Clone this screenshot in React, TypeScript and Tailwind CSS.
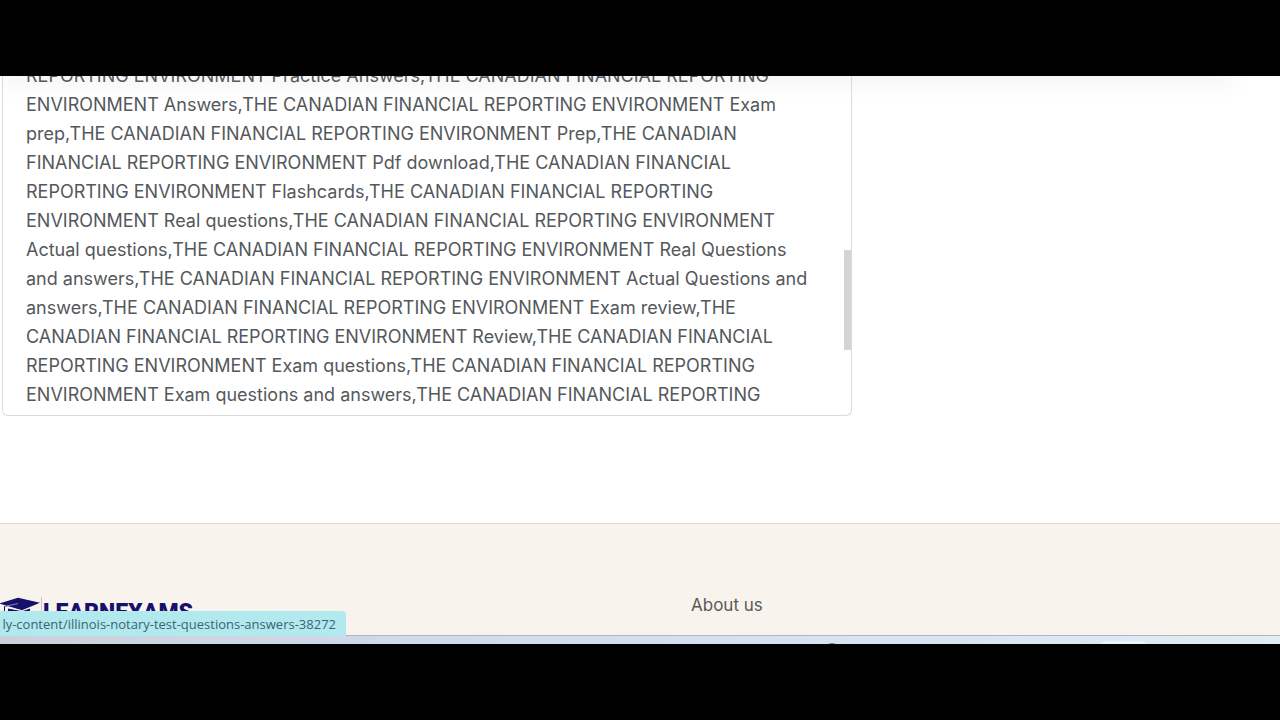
const lines = [
  'REPORTING ENVIRONMENT Practice Answers,THE CANADIAN FINANCIAL REPORTING',
  'ENVIRONMENT Answers,THE CANADIAN FINANCIAL REPORTING ENVIRONMENT Exam',
  'prep,THE CANADIAN FINANCIAL REPORTING ENVIRONMENT Prep,THE CANADIAN',
  'FINANCIAL REPORTING ENVIRONMENT Pdf download,THE CANADIAN FINANCIAL',
  'REPORTING ENVIRONMENT Flashcards,THE CANADIAN FINANCIAL REPORTING',
  'ENVIRONMENT Real questions,THE CANADIAN FINANCIAL REPORTING ENVIRONMENT',
  'Actual questions,THE CANADIAN FINANCIAL REPORTING ENVIRONMENT Real Questions',
  'and answers,THE CANADIAN FINANCIAL REPORTING ENVIRONMENT Actual Questions and',
  'answers,THE CANADIAN FINANCIAL REPORTING ENVIRONMENT Exam review,THE',
  'CANADIAN FINANCIAL REPORTING ENVIRONMENT Review,THE CANADIAN FINANCIAL',
  'REPORTING ENVIRONMENT Exam questions,THE CANADIAN FINANCIAL REPORTING',
  'ENVIRONMENT Exam questions and answers,THE CANADIAN FINANCIAL REPORTING',
];

function KeywordCard() {
  return (
    <article className="relative ml-0.5 flex h-[340px] w-2/3 max-w-[850px] flex-col justify-end overflow-hidden rounded-b-md border border-t-0 border-[#d9dbdd] pb-1.5 pl-[23px]">
      <p className="whitespace-nowrap text-[18px] leading-[29px] text-[#54585b]">
        {lines.map((line) => (
          <span key={line} className="block">
            {line}
          </span>
        ))}
      </p>
      <div className="absolute right-0 top-[174px] h-[100px] w-[7px] bg-[#d2d4d6]" />
    </article>
  );
}

function Logo() {
  return (
    <a href="#home" aria-label="LearnExams" className="flex h-8 items-start text-[#17116b]">
      <svg viewBox="0 0 40 32" className="h-8 w-10" aria-hidden="true">
        <path fill="currentColor" d="M-1 6.5 18 .8l22 5-18 7.4Z" />
        <path fill="currentColor" d="M8 11.6 22 14l8-2.6V20H8Z" />
        <path d="M18 6.5 4.5 9.4V19" fill="none" stroke="currentColor" strokeWidth="1" />
        <path d="M5 9.2 18 6.6" fill="none" stroke="#f8f3ed" strokeWidth=".5" />
        <path d="m7 10.4 15 3.4 10-3.6" fill="none" stroke="#f8f3ed" strokeWidth=".7" />
      </svg>
      <span className="ml-px h-8 border-l border-[#c9c3cb] pl-px pt-1 font-['Roboto',sans-serif] text-[23px] font-black leading-[24px]">
        LEARNEXAMS
      </span>
    </a>
  );
}

export default function App() {
  return (
    <div className="flex min-h-screen flex-col bg-black py-[76px] font-['Inter',sans-serif]">
      <div className="relative flex flex-1 flex-col overflow-hidden bg-white">
        <div className="absolute -top-4 left-0 right-12 h-4 shadow-[0_4px_28px_rgba(0,0,0,0.08)]" />
        <main className="flex-1">
          <KeywordCard />
        </main>
        <footer className="grid h-[112px] grid-cols-[691px_1fr] items-start overflow-hidden border-t border-[#dcdcdc] bg-[#f8f3ed] pt-[73px]">
          <Logo />
          <nav>
            <a href="#about" className="block text-[17px] leading-4 text-[#5b5958]">
              About us
            </a>
          </nav>
        </footer>
        <div className="relative flex h-[9px] overflow-hidden border-t border-[#aeb5c2] bg-linear-to-r from-[#cad1dc] via-[#d5def1] to-[#e1ecf3]">
          <div className="absolute left-[824px] top-[7px] h-4 w-4 rounded-full bg-[#a86a60]" />
          <div className="absolute left-[1102px] top-[5px] h-4 w-11 rounded-sm bg-[#ecf4fa]" />
        </div>
        <div className="absolute bottom-2 left-0 flex h-[25px] w-[346px] items-center justify-end overflow-hidden rounded-tr-sm bg-[#b2e9ef] pr-2.5">
          <span className="whitespace-nowrap font-['Open_Sans',sans-serif] text-[13px] leading-5 text-[#3c6470]">
            ly-content/illinois-notary-test-questions-answers-38272
          </span>
        </div>
      </div>
    </div>
  );
}
